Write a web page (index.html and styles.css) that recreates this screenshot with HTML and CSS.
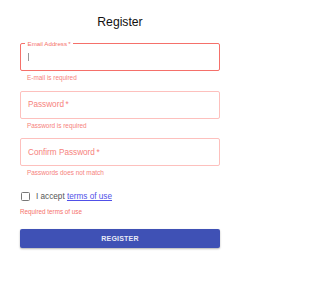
FILE: index.html
```html
<!DOCTYPE html>
<html>
<head>
<meta charset="utf-8">
<link rel="stylesheet" href="styles.css">
</head>
<body>
<div class="form">
  <h1 class="title">Register</h1>
  <div class="field">
    <div class="box focused">
      <span class="legend">Email Address&thinsp;*</span>
      <span class="caret"></span>
    </div>
    <div class="helper">E-mail is required</div>
  </div>
  <div class="field">
    <div class="box">
      <span class="placeholder">Password&thinsp;*</span>
    </div>
    <div class="helper">Password is required</div>
  </div>
  <div class="field">
    <div class="box">
      <span class="placeholder">Confirm Password&thinsp;*</span>
    </div>
    <div class="helper">Passwords does not match</div>
  </div>
  <div class="check-row">
    <span class="checkbox"></span>
    <span class="check-label">I accept <a class="link" href="#">terms of use</a></span>
  </div>
  <div class="terms-error">Required terms of use</div>
  <button class="btn">REGISTER</button>
</div>
</body>
</html>
```
FILE: styles.css
```css
html, body {
  margin: 0;
  padding: 0;
  background: #fff;
}
body {
  font-family: "Liberation Sans", Arial, sans-serif;
  width: 260px;
  height: 285px;
  overflow: hidden;
}
.form {
  margin-left: 20px;
  width: 200px;
  padding-top: 14px;
  display: flex;
  flex-direction: column;
}
.title {
  margin: 0;
  font-size: 12.2px;
  font-weight: 400;
  line-height: 16px;
  text-align: center;
  color: #111;
  height: 29px;
}
.field {
  display: flex;
  flex-direction: column;
  height: 47.5px;
}
.box {
  position: relative;
  height: 28px;
  box-sizing: border-box;
  border: 1px solid #fdc0bd;
  border-radius: 2px;
  display: flex;
  align-items: center;
  padding-left: 7px;
}
.box.focused {
  border: 1.5px solid #f5706a;
}
.legend {
  position: absolute;
  top: -4px;
  left: 4px;
  padding: 0 2.5px;
  background: #fff;
  font-size: 6.2px;
  line-height: 7px;
  color: #f5706a;
}
.caret {
  display: block;
  width: 1px;
  height: 8px;
  background: #999;
}
.placeholder {
  font-size: 8.2px;
  color: #f6827c;
}
.helper {
  font-size: 6.4px;
  color: #f6827c;
  padding-left: 7px;
  margin-top: 3px;
  line-height: 8px;
}
.check-row {
  display: flex;
  align-items: center;
  height: 14px;
  margin-top: 4px;
}
.checkbox {
  width: 7.5px;
  height: 7.5px;
  border: 1.2px solid #777;
  border-radius: 1.5px;
  margin-left: 0.5px;
}
.check-label {
  font-size: 8.2px;
  color: #555;
  margin-left: 6px;
}
.link {
  color: #5050e8;
  text-decoration: underline;
}
.terms-error {
  font-size: 6.3px;
  color: #f5706a;
  margin-top: 4px;
  line-height: 8px;
}
.btn {
  margin-top: 13px;
  height: 19px;
  width: 200px;
  border: none;
  border-radius: 2px;
  background: #3f51b5;
  color: #e8eaf6;
  font-family: "Liberation Sans", Arial, sans-serif;
  font-size: 7px;
  font-weight: 700;
  letter-spacing: 0.2px;
  box-shadow: 0 1px 2px rgba(0,0,0,0.3);
  padding: 0;
}
```
